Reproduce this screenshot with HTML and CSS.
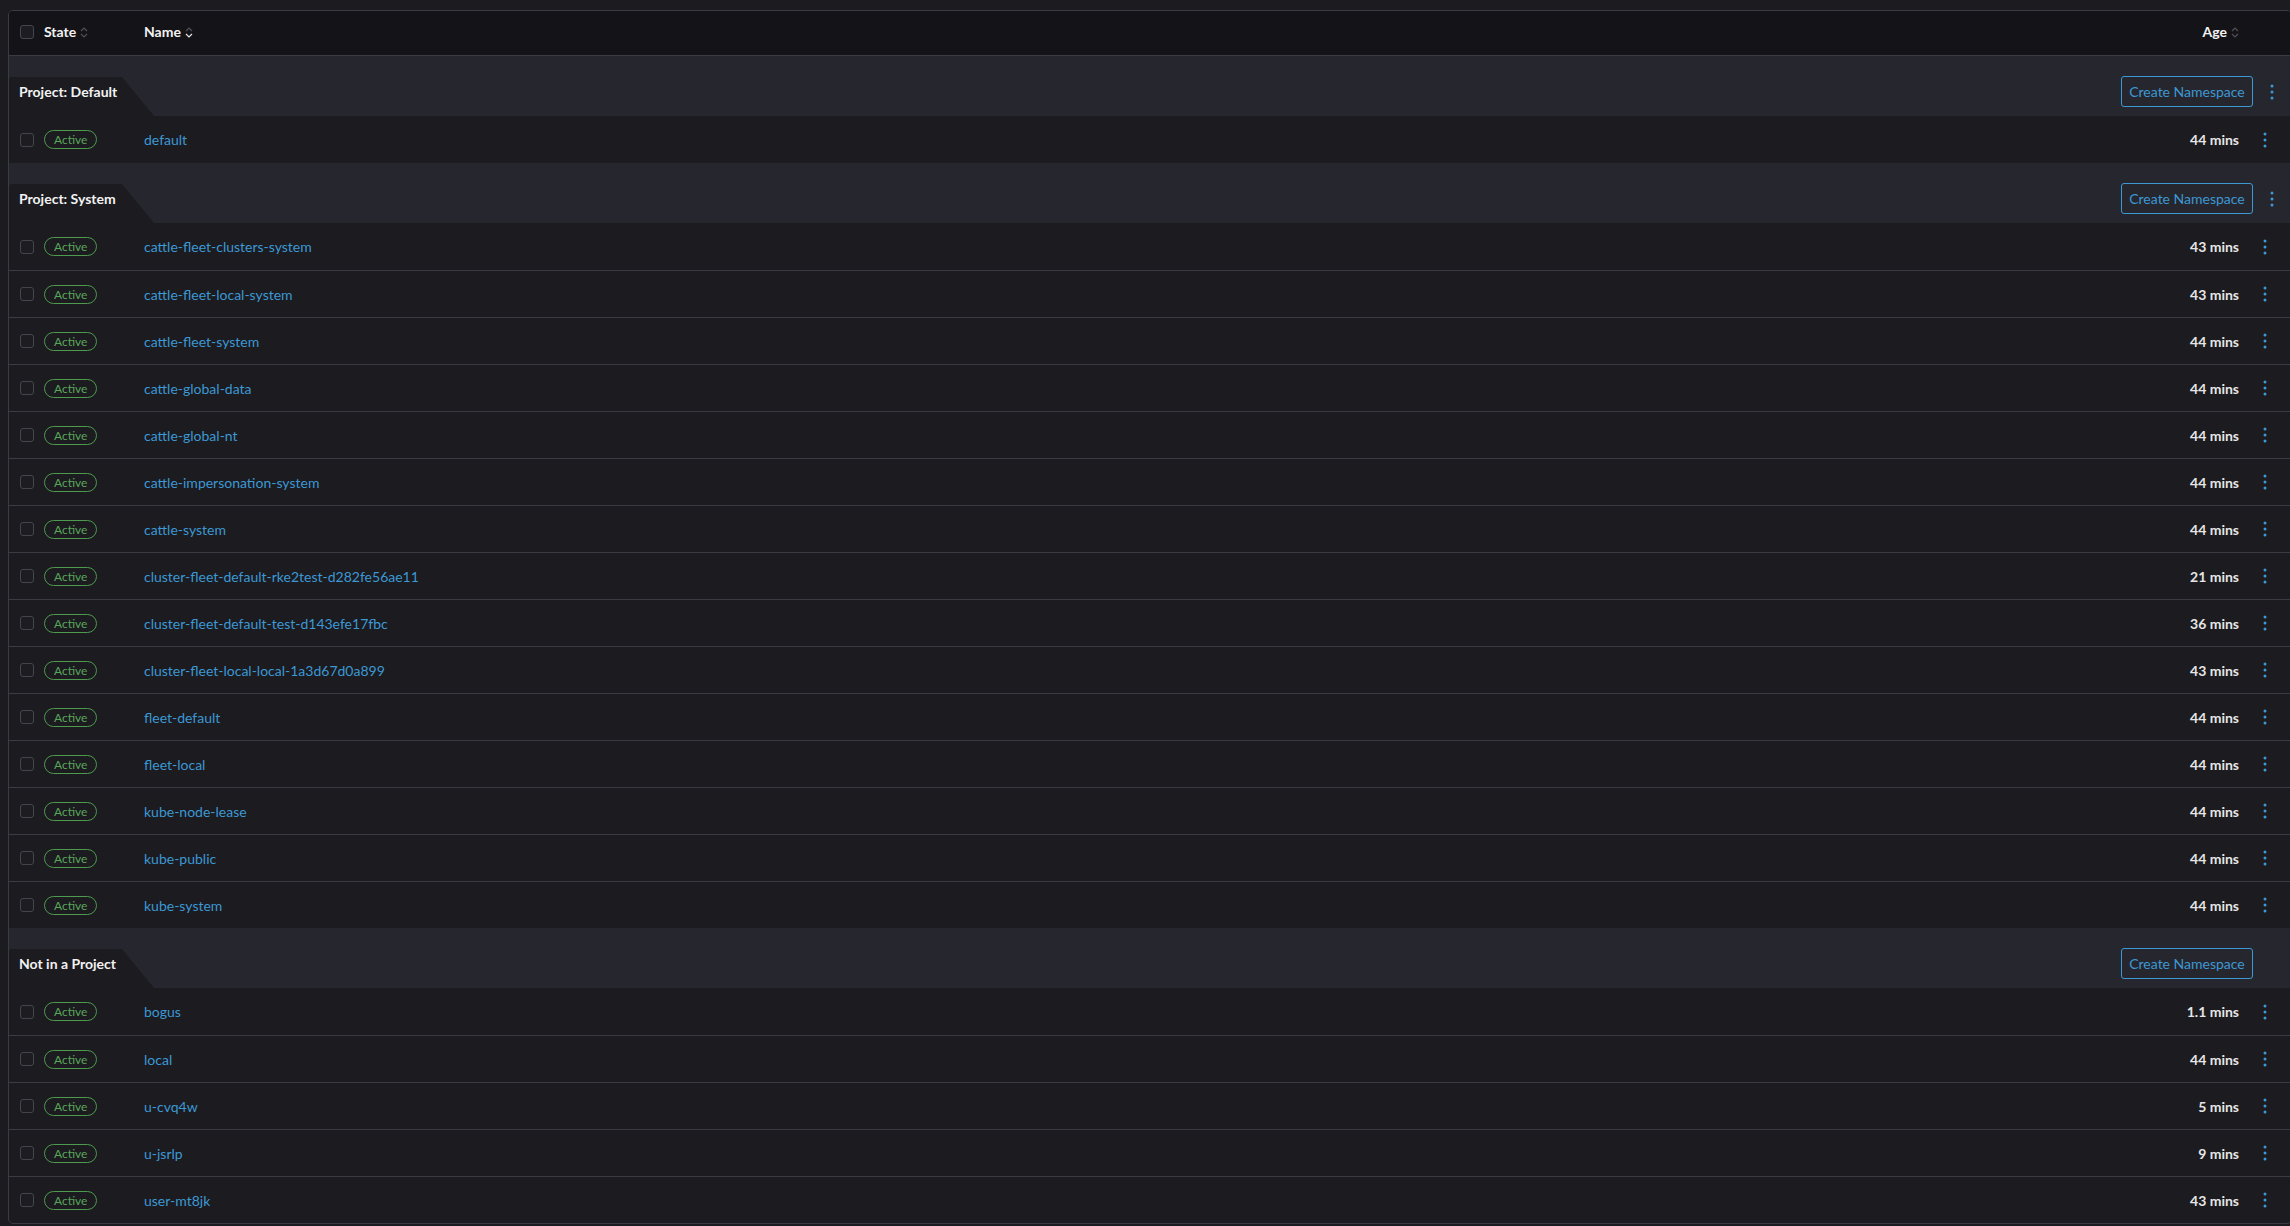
FILE: index.html
```html
<!DOCTYPE html>
<html>
<head>
<meta charset="utf-8">
<link rel="stylesheet" href="styles.css">
</head>
<body>
<div class="table">
  <div class="thead">
    <div class="cell cb"><span class="check"></span></div>
    <div class="cell th">State <svg class="sort" viewBox="0 0 8 11"><path class="dim" d="M1 4 L4 1 L7 4"/><path class="dim" d="M1 7 L4 10 L7 7"/></svg></div>
    <div class="cell th">Name <svg class="sort" viewBox="0 0 8 11"><path class="dim" d="M1 4 L4 1 L7 4"/><path class="on" d="M1 7 L4 10 L7 7"/></svg></div>
    <div class="cell th age">Age <svg class="sort" viewBox="0 0 8 11"><path class="dim" d="M1 4 L4 1 L7 4"/><path class="dim" d="M1 7 L4 10 L7 7"/></svg></div>
    <div class="cell"></div>
  </div>

  <div class="band">
    <div class="tab">Project: Default</div>
    <div class="spacer"></div>
    <button class="btn">Create Namespace</button>
    <div class="kebab band-kebab"><svg viewBox="0 0 4 16"><circle cx="2" cy="2" r="1.5"/><circle cx="2" cy="8" r="1.5"/><circle cx="2" cy="14" r="1.5"/></svg></div>
  </div>
  <div class="group">
    <div class="row"><div class="cell cb"><span class="check"></span></div><div class="cell"><span class="badge">Active</span></div><div class="cell"><a class="link">default</a></div><div class="cell age">44 mins</div><div class="kebab"><svg viewBox="0 0 4 16"><circle cx="2" cy="2" r="1.5"/><circle cx="2" cy="8" r="1.5"/><circle cx="2" cy="14" r="1.5"/></svg></div></div>
  </div>

  <div class="band">
    <div class="tab">Project: System</div>
    <div class="spacer"></div>
    <button class="btn">Create Namespace</button>
    <div class="kebab band-kebab"><svg viewBox="0 0 4 16"><circle cx="2" cy="2" r="1.5"/><circle cx="2" cy="8" r="1.5"/><circle cx="2" cy="14" r="1.5"/></svg></div>
  </div>
  <div class="group">
    <div class="row"><div class="cell cb"><span class="check"></span></div><div class="cell"><span class="badge">Active</span></div><div class="cell"><a class="link">cattle-fleet-clusters-system</a></div><div class="cell age">43 mins</div><div class="kebab"><svg viewBox="0 0 4 16"><circle cx="2" cy="2" r="1.5"/><circle cx="2" cy="8" r="1.5"/><circle cx="2" cy="14" r="1.5"/></svg></div></div>
    <div class="row"><div class="cell cb"><span class="check"></span></div><div class="cell"><span class="badge">Active</span></div><div class="cell"><a class="link">cattle-fleet-local-system</a></div><div class="cell age">43 mins</div><div class="kebab"><svg viewBox="0 0 4 16"><circle cx="2" cy="2" r="1.5"/><circle cx="2" cy="8" r="1.5"/><circle cx="2" cy="14" r="1.5"/></svg></div></div>
    <div class="row"><div class="cell cb"><span class="check"></span></div><div class="cell"><span class="badge">Active</span></div><div class="cell"><a class="link">cattle-fleet-system</a></div><div class="cell age">44 mins</div><div class="kebab"><svg viewBox="0 0 4 16"><circle cx="2" cy="2" r="1.5"/><circle cx="2" cy="8" r="1.5"/><circle cx="2" cy="14" r="1.5"/></svg></div></div>
    <div class="row"><div class="cell cb"><span class="check"></span></div><div class="cell"><span class="badge">Active</span></div><div class="cell"><a class="link">cattle-global-data</a></div><div class="cell age">44 mins</div><div class="kebab"><svg viewBox="0 0 4 16"><circle cx="2" cy="2" r="1.5"/><circle cx="2" cy="8" r="1.5"/><circle cx="2" cy="14" r="1.5"/></svg></div></div>
    <div class="row"><div class="cell cb"><span class="check"></span></div><div class="cell"><span class="badge">Active</span></div><div class="cell"><a class="link">cattle-global-nt</a></div><div class="cell age">44 mins</div><div class="kebab"><svg viewBox="0 0 4 16"><circle cx="2" cy="2" r="1.5"/><circle cx="2" cy="8" r="1.5"/><circle cx="2" cy="14" r="1.5"/></svg></div></div>
    <div class="row"><div class="cell cb"><span class="check"></span></div><div class="cell"><span class="badge">Active</span></div><div class="cell"><a class="link">cattle-impersonation-system</a></div><div class="cell age">44 mins</div><div class="kebab"><svg viewBox="0 0 4 16"><circle cx="2" cy="2" r="1.5"/><circle cx="2" cy="8" r="1.5"/><circle cx="2" cy="14" r="1.5"/></svg></div></div>
    <div class="row"><div class="cell cb"><span class="check"></span></div><div class="cell"><span class="badge">Active</span></div><div class="cell"><a class="link">cattle-system</a></div><div class="cell age">44 mins</div><div class="kebab"><svg viewBox="0 0 4 16"><circle cx="2" cy="2" r="1.5"/><circle cx="2" cy="8" r="1.5"/><circle cx="2" cy="14" r="1.5"/></svg></div></div>
    <div class="row"><div class="cell cb"><span class="check"></span></div><div class="cell"><span class="badge">Active</span></div><div class="cell"><a class="link">cluster-fleet-default-rke2test-d282fe56ae11</a></div><div class="cell age">21 mins</div><div class="kebab"><svg viewBox="0 0 4 16"><circle cx="2" cy="2" r="1.5"/><circle cx="2" cy="8" r="1.5"/><circle cx="2" cy="14" r="1.5"/></svg></div></div>
    <div class="row"><div class="cell cb"><span class="check"></span></div><div class="cell"><span class="badge">Active</span></div><div class="cell"><a class="link">cluster-fleet-default-test-d143efe17fbc</a></div><div class="cell age">36 mins</div><div class="kebab"><svg viewBox="0 0 4 16"><circle cx="2" cy="2" r="1.5"/><circle cx="2" cy="8" r="1.5"/><circle cx="2" cy="14" r="1.5"/></svg></div></div>
    <div class="row"><div class="cell cb"><span class="check"></span></div><div class="cell"><span class="badge">Active</span></div><div class="cell"><a class="link">cluster-fleet-local-local-1a3d67d0a899</a></div><div class="cell age">43 mins</div><div class="kebab"><svg viewBox="0 0 4 16"><circle cx="2" cy="2" r="1.5"/><circle cx="2" cy="8" r="1.5"/><circle cx="2" cy="14" r="1.5"/></svg></div></div>
    <div class="row"><div class="cell cb"><span class="check"></span></div><div class="cell"><span class="badge">Active</span></div><div class="cell"><a class="link">fleet-default</a></div><div class="cell age">44 mins</div><div class="kebab"><svg viewBox="0 0 4 16"><circle cx="2" cy="2" r="1.5"/><circle cx="2" cy="8" r="1.5"/><circle cx="2" cy="14" r="1.5"/></svg></div></div>
    <div class="row"><div class="cell cb"><span class="check"></span></div><div class="cell"><span class="badge">Active</span></div><div class="cell"><a class="link">fleet-local</a></div><div class="cell age">44 mins</div><div class="kebab"><svg viewBox="0 0 4 16"><circle cx="2" cy="2" r="1.5"/><circle cx="2" cy="8" r="1.5"/><circle cx="2" cy="14" r="1.5"/></svg></div></div>
    <div class="row"><div class="cell cb"><span class="check"></span></div><div class="cell"><span class="badge">Active</span></div><div class="cell"><a class="link">kube-node-lease</a></div><div class="cell age">44 mins</div><div class="kebab"><svg viewBox="0 0 4 16"><circle cx="2" cy="2" r="1.5"/><circle cx="2" cy="8" r="1.5"/><circle cx="2" cy="14" r="1.5"/></svg></div></div>
    <div class="row"><div class="cell cb"><span class="check"></span></div><div class="cell"><span class="badge">Active</span></div><div class="cell"><a class="link">kube-public</a></div><div class="cell age">44 mins</div><div class="kebab"><svg viewBox="0 0 4 16"><circle cx="2" cy="2" r="1.5"/><circle cx="2" cy="8" r="1.5"/><circle cx="2" cy="14" r="1.5"/></svg></div></div>
    <div class="row"><div class="cell cb"><span class="check"></span></div><div class="cell"><span class="badge">Active</span></div><div class="cell"><a class="link">kube-system</a></div><div class="cell age">44 mins</div><div class="kebab"><svg viewBox="0 0 4 16"><circle cx="2" cy="2" r="1.5"/><circle cx="2" cy="8" r="1.5"/><circle cx="2" cy="14" r="1.5"/></svg></div></div>
  </div>

  <div class="band">
    <div class="tab">Not in a Project</div>
    <div class="spacer"></div>
    <button class="btn">Create Namespace</button>
    <div class="kebab band-kebab empty"></div>
  </div>
  <div class="group">
    <div class="row"><div class="cell cb"><span class="check"></span></div><div class="cell"><span class="badge">Active</span></div><div class="cell"><a class="link">bogus</a></div><div class="cell age">1.1 mins</div><div class="kebab"><svg viewBox="0 0 4 16"><circle cx="2" cy="2" r="1.5"/><circle cx="2" cy="8" r="1.5"/><circle cx="2" cy="14" r="1.5"/></svg></div></div>
    <div class="row"><div class="cell cb"><span class="check"></span></div><div class="cell"><span class="badge">Active</span></div><div class="cell"><a class="link">local</a></div><div class="cell age">44 mins</div><div class="kebab"><svg viewBox="0 0 4 16"><circle cx="2" cy="2" r="1.5"/><circle cx="2" cy="8" r="1.5"/><circle cx="2" cy="14" r="1.5"/></svg></div></div>
    <div class="row"><div class="cell cb"><span class="check"></span></div><div class="cell"><span class="badge">Active</span></div><div class="cell"><a class="link">u-cvq4w</a></div><div class="cell age">5 mins</div><div class="kebab"><svg viewBox="0 0 4 16"><circle cx="2" cy="2" r="1.5"/><circle cx="2" cy="8" r="1.5"/><circle cx="2" cy="14" r="1.5"/></svg></div></div>
    <div class="row"><div class="cell cb"><span class="check"></span></div><div class="cell"><span class="badge">Active</span></div><div class="cell"><a class="link">u-jsrlp</a></div><div class="cell age">9 mins</div><div class="kebab"><svg viewBox="0 0 4 16"><circle cx="2" cy="2" r="1.5"/><circle cx="2" cy="8" r="1.5"/><circle cx="2" cy="14" r="1.5"/></svg></div></div>
    <div class="row"><div class="cell cb"><span class="check"></span></div><div class="cell"><span class="badge">Active</span></div><div class="cell"><a class="link">user-mt8jk</a></div><div class="cell age">43 mins</div><div class="kebab"><svg viewBox="0 0 4 16"><circle cx="2" cy="2" r="1.5"/><circle cx="2" cy="8" r="1.5"/><circle cx="2" cy="14" r="1.5"/></svg></div></div>
  </div>
</div>
</body>
</html>
```

FILE: styles.css
```css
html, body {
  margin: 0;
  padding: 0;
  background: #1b1b20;
  overflow: hidden;
  height: 100%;
}
body {
  padding: 10px 0 0 8px;
  font-family: Lato, "Open Sans", "Liberation Sans", sans-serif;
  font-size: 14px;
  color: #e6e6e6;
  box-sizing: border-box;
}
.table {
  width: 2282px;
  border: 1px solid #3b3c43;
  border-radius: 5px;
  overflow: hidden;
  background: #1b1b20;
}
.thead, .row {
  display: grid;
  grid-template-columns: 35px 100px 1fr auto 52px;
  align-items: center;
}
.thead {
  height: 45px;
  padding-bottom: 3px;
  background: #141418;
  border-bottom: 1px solid #3b3c43;
  box-sizing: border-box;
}
.cell {
  display: flex;
  align-items: center;
  white-space: nowrap;
}
.cb {
  padding-left: 11px;
}
.check {
  display: block;
  width: 12px;
  height: 12px;
  border: 1px solid #45464d;
  border-radius: 3px;
  background: #1c1c21;
}
.th {
  font-weight: 700;
  color: #f2f2f2;
}
.sort {
  width: 8px;
  height: 11px;
  margin-left: 4px;
  margin-top: 1px;
}
.sort path {
  fill: none;
  stroke-width: 1.2;
}
.sort .dim { stroke: #4f5057; }
.sort .on { stroke: #e6e6e6; }
.age {
  justify-content: flex-end;
}
.row .age {
  font-weight: 700;
  color: #e6e6e6;
}
.band {
  display: flex;
  align-items: flex-end;
  height: 60px;
  background: #26272e;
}
.tab {
  width: 145px;
  height: 39px;
  box-sizing: border-box;
  padding: 5px 0 0 10px;
  line-height: 20px;
  font-weight: 700;
  color: #f2f2f2;
  background: #1b1b20;
  clip-path: polygon(0 0, 113px 0, 145px 100%, 0 100%);
  border-top-left-radius: 3px;
  white-space: nowrap;
  flex: none;
}
.spacer { flex: 1; }
.btn {
  font-family: Lato, "Open Sans", "Liberation Sans", sans-serif;
  font-size: 14px;
  color: #3d98d3;
  background: transparent;
  border: 1px solid #3d98d3;
  border-radius: 3px;
  height: 31px;
  width: 132px;
  padding: 0;
  margin-bottom: 9px;
  line-height: 29px;
  white-space: nowrap;
}
.kebab {
  display: flex;
  justify-content: center;
  align-items: center;
}
.kebab svg {
  width: 4px;
  height: 16px;
  fill: #3d98d3;
}
.band-kebab {
  width: 38px;
  height: 31px;
  margin-bottom: 9px;
}
.row {
  height: 47px;
  box-sizing: border-box;
}
.row + .row {
  border-top: 1px solid #3b3c43;
}
.badge {
  display: inline-block;
  height: 19px;
  box-sizing: border-box;
  padding: 0 9px;
  border: 1px solid #4e9a4e;
  border-radius: 10px;
  color: #5aa55a;
  font-size: 12px;
  line-height: 17px;
}
.link {
  color: #3d98d3;
  text-decoration: none;
}
```
